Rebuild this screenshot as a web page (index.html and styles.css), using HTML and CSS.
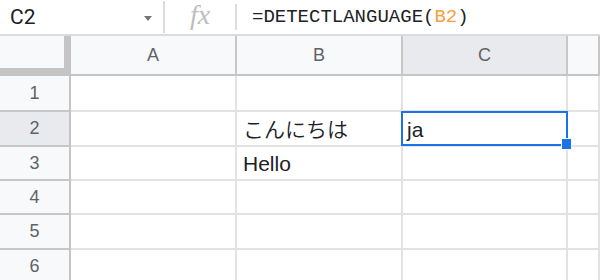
FILE: index.html
```html
<!DOCTYPE html>
<html lang="en">
<head>
  <meta charset="UTF-8">
  <meta name="viewport" content="width=device-width, initial-scale=1.0">
  <title>DETECTLANGUAGE</title>
  <link rel="stylesheet" href="styles.css">
</head>
<body>
  <div class="formula-bar">
    <div class="name-box">
      <span class="name">C2</span>
      <span class="caret"></span>
    </div>
    <div class="divider tall"></div>
    <div class="fx">fx</div>
    <div class="divider"></div>
    <div class="formula">=DETECTLANGUAGE(<span class="ref">B2</span>)</div>
  </div>

  <div class="sheet">
    <div class="corner"></div>
    <div class="col-head">A</div>
    <div class="col-head">B</div>
    <div class="col-head active">C</div>
    <div class="col-head"></div>

    <div class="row-head">1</div>
    <div class="cell"></div>
    <div class="cell"></div>
    <div class="cell"></div>
    <div class="cell"></div>

    <div class="row-head active">2</div>
    <div class="cell"></div>
    <div class="cell jp">こんにちは</div>
    <div class="cell selected">ja<span class="handle"></span></div>
    <div class="cell"></div>

    <div class="row-head">3</div>
    <div class="cell"></div>
    <div class="cell">Hello</div>
    <div class="cell"></div>
    <div class="cell"></div>

    <div class="row-head">4</div>
    <div class="cell"></div>
    <div class="cell"></div>
    <div class="cell"></div>
    <div class="cell"></div>

    <div class="row-head">5</div>
    <div class="cell"></div>
    <div class="cell"></div>
    <div class="cell"></div>
    <div class="cell"></div>

    <div class="row-head">6</div>
    <div class="cell"></div>
    <div class="cell"></div>
    <div class="cell"></div>
    <div class="cell"></div>
  </div>
</body>
</html>
```

FILE: styles.css
```css
body {
  margin: 0;
  background: #fff;
  overflow: hidden;
  font-family: 'Liberation Sans', Arial, sans-serif;
  color: #202124;
}

.formula-bar {
  display: flex;
  align-items: center;
  height: 34px;
  border-bottom: 2px solid #dadce0;
}

.name-box {
  width: 163px;
  box-sizing: border-box;
  padding: 0 11px 0 10px;
  display: flex;
  align-items: center;
  justify-content: space-between;
  font-family: 'Roboto', sans-serif;
  font-size: 21px;
}

.caret {
  width: 0;
  height: 0;
  border-left: 4.5px solid transparent;
  border-right: 4.5px solid transparent;
  border-top: 5px solid #757575;
  margin-top: 2px;
}

.divider {
  width: 2px;
  height: 26px;
  background: #dadce0;
}

.divider.tall {
  height: 32px;
  align-self: flex-start;
  margin-top: 1px;
}

.fx {
  width: 70px;
  text-align: center;
  font-family: 'Liberation Serif', serif;
  font-style: italic;
  font-size: 28px;
  color: #bdbdbd;
  margin-top: -4px;
}

.formula {
  padding-left: 15px;
  font-family: 'Liberation Mono', monospace;
  font-size: 19px;
  color: #202124;
}

.formula .ref {
  color: #f5a03a;
}

.sheet {
  display: grid;
  grid-template-columns: 71px 166px 166px 165px 1fr;
  grid-template-rows: 40px 36px 35px 34px 34px 35px 35px;
}

.sheet > div {
  box-sizing: border-box;
  border-right: 2px solid #e2e2e2;
  border-bottom: 2px solid #e2e2e2;
}

.corner {
  background: #f8f9fa;
  border-right: 7px solid #c4c4c4 !important;
  border-bottom: 8px solid #c4c4c4 !important;
}

.col-head,
.row-head {
  background: #f8f9fa;
  color: #5f6368;
  font-size: 18px;
  display: flex;
  align-items: center;
  justify-content: center;
}

.col-head {
  border-right-color: #c7c7c7 !important;
  border-bottom-color: #c4c4c4 !important;
}

.row-head {
  border-right-color: #c4c4c4 !important;
  border-bottom-color: #c7c7c7 !important;
}

.col-head.active,
.row-head.active {
  background: #e8eaed;
}

.cell {
  display: flex;
  align-items: flex-end;
  padding: 0 0 3px 6px;
  font-size: 21px;
  line-height: 24px;
  white-space: nowrap;
}

.cell.jp {
  font-family: 'Liberation Sans', 'Noto Sans CJK JP', sans-serif;
  font-weight: 350;
}

.cell.selected {
  position: relative;
  padding-left: 4px;
}

.cell.selected::before {
  content: '';
  position: absolute;
  top: -1px;
  left: -2px;
  right: -2px;
  bottom: -1px;
  border: 2px solid #1a73e8;
}

.handle {
  position: absolute;
  right: -6px;
  bottom: -5px;
  width: 9px;
  height: 10px;
  background: #1a73e8;
  border: 1px solid #fff;
}
```
